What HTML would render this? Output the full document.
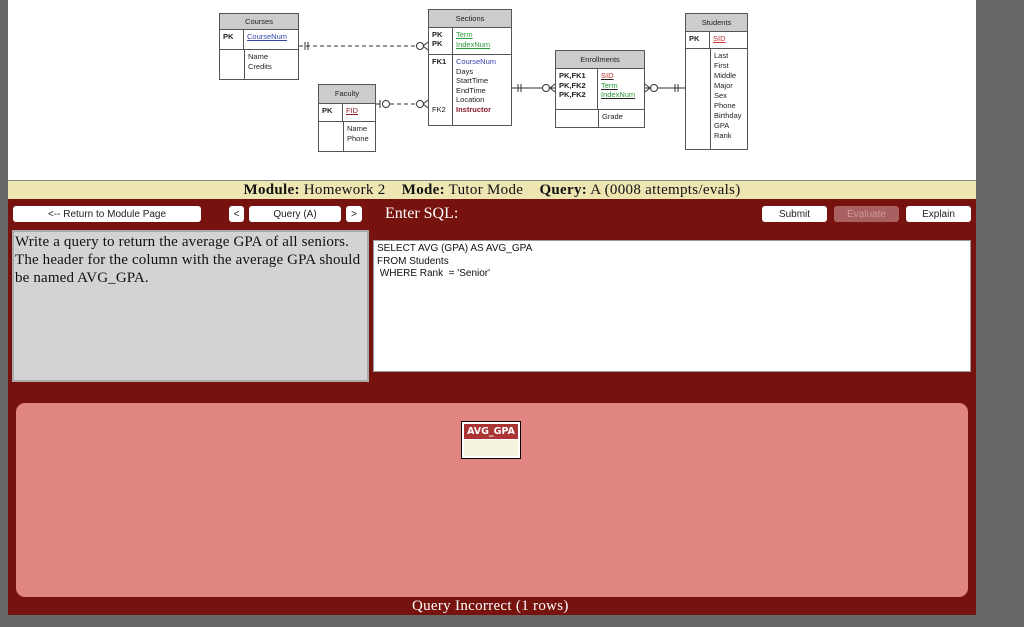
<!DOCTYPE html>
<html><head><style>
body{margin:0;width:1024px;height:627px;background:#666;position:relative;overflow:hidden;font-family:"Liberation Sans",sans-serif}
.a{position:absolute}
.t{position:absolute;border:1px solid #555;background:#fff;font-size:7.5px;color:#222;box-sizing:border-box}
.h{background:#ccc;border-bottom:1px solid #555;text-align:center;box-sizing:border-box}
.r{border-bottom:1px solid #555;display:flex;box-sizing:border-box}
.k{border-right:1px solid #555;font-weight:bold;padding:2px 3px;box-sizing:border-box}
.v{padding:2px 3px;line-height:9.5px}
.btn{position:absolute;top:206px;height:16px;background:#fff;border-radius:3px;font-size:10px;text-align:center;line-height:18px;color:#222}
.ser{font-family:"Liberation Serif",serif}
</style></head><body>
<div class="a" style="left:8px;top:0;width:968px;height:180px;background:#fff"></div>
<div class="a" style="left:8px;top:180px;width:968px;height:1px;background:#888"></div>
<svg class="a" style="left:0;top:0" width="1024" height="180">
<g stroke="#333" stroke-width="1" fill="none">
<line x1="299" y1="46" x2="420" y2="46" stroke-dasharray="4,3"/><line x1="305" y1="42" x2="305" y2="50"/><line x1="308" y1="42" x2="308" y2="50"/><circle cx="420" cy="46" r="3.5" fill="#fff"/><path d="M423 46 L428 42 M423 46 L428 50"/>
<line x1="376" y1="104" x2="420" y2="104" stroke-dasharray="4,3"/><line x1="380" y1="100" x2="380" y2="108"/><circle cx="386" cy="104" r="3.5" fill="#fff"/><circle cx="420" cy="104" r="3.5" fill="#fff"/><path d="M423 104 L428 100 M423 104 L428 108"/>
<line x1="512" y1="88" x2="555" y2="88"/><line x1="518" y1="84" x2="518" y2="92"/><line x1="521" y1="84" x2="521" y2="92"/><circle cx="546" cy="88" r="3.5" fill="#fff"/><path d="M550 88 L555 84 M550 88 L555 92"/>
<line x1="645" y1="88" x2="685" y2="88"/><path d="M650 88 L645 84 M650 88 L645 92"/><circle cx="654" cy="88" r="3.5" fill="#fff"/><line x1="675" y1="84" x2="675" y2="92"/><line x1="678" y1="84" x2="678" y2="92"/>
</g></svg>
<div class="t" style="left:219px;top:13px;width:80px;height:67px"><div class="h" style="height:16px;line-height:15px">Courses</div><div class="r" style="height:20px"><div class="k" style="width:24px">PK</div><div class="v" style="color:#3344aa;text-decoration:underline">CourseNum</div></div><div style="display:flex;height:29px"><div style="width:24px;border-right:1px solid #555"></div><div class="v">Name<br>Credits</div></div></div>
<div class="t" style="left:428px;top:9px;width:84px;height:117px"><div class="h" style="height:18px;line-height:17px">Sections</div><div class="r" style="height:27px"><div class="k" style="width:24px;line-height:9px">PK<br>PK</div><div class="v" style="color:#2a9a3a;text-decoration:underline">Term<br>IndexNum</div></div><div style="display:flex;height:70px"><div class="k" style="width:24px;line-height:9.5px;border-right:1px solid #555">FK1<br><br><br><br><br><span style="font-weight:normal">FK2</span></div><div class="v"><span style="color:#3344aa">CourseNum</span><br>Days<br>StartTime<br>EndTime<br>Location<br><span style="color:#8a1a2a;font-weight:bold">Instructor</span></div></div></div>
<div class="t" style="left:318px;top:84px;width:58px;height:68px"><div class="h" style="height:19px;line-height:18px">Faculty</div><div class="r" style="height:18px"><div class="k" style="width:24px">PK</div><div class="v" style="color:#8a1a2a;text-decoration:underline">FID</div></div><div style="display:flex;height:29px"><div style="width:24px;border-right:1px solid #555"></div><div class="v">Name<br>Phone</div></div></div>
<div class="t" style="left:555px;top:50px;width:90px;height:78px"><div class="h" style="height:18px;line-height:17px">Enrollments</div><div class="r" style="height:41px"><div class="k" style="width:42px;line-height:9.5px">PK,FK1<br>PK,FK2<br>PK,FK2</div><div class="v" style="text-decoration:underline"><span style="color:#c03030">SID</span><br><span style="color:#2a9a3a">Term<br>IndexNum</span></div></div><div style="display:flex;height:17px"><div style="width:42px;border-right:1px solid #555"></div><div class="v">Grade</div></div></div>
<div class="t" style="left:685px;top:13px;width:63px;height:137px"><div class="h" style="height:18px;line-height:17px">Students</div><div class="r" style="height:17px"><div class="k" style="width:24px">PK</div><div class="v" style="color:#c03030;text-decoration:underline">SID</div></div><div style="display:flex;height:100px"><div style="width:24px;border-right:1px solid #555"></div><div class="v" style="line-height:10px">Last<br>First<br>Middle<br>Major<br>Sex<br>Phone<br>Birthday<br>GPA<br>Rank</div></div></div>

<div class="a ser" style="left:8px;top:181px;width:968px;height:18px;background:#ede6b2;text-align:center;font-size:15px;letter-spacing:0.3px;line-height:18px;color:#111"><b>Module:</b> Homework 2 &nbsp;&nbsp; <b>Mode:</b> Tutor Mode &nbsp;&nbsp; <b>Query:</b> A (0008 attempts/evals)</div>
<div class="a" style="left:8px;top:199px;width:968px;height:416px;background:#77130f"></div>
<div class="btn" style="left:13px;width:188px">&lt;-- Return to Module Page</div>
<div class="btn" style="left:229px;width:15px">&lt;</div>
<div class="btn" style="left:249px;width:92px">Query (A)</div>
<div class="btn" style="left:346px;width:16px">&gt;</div>
<div class="a ser" style="left:385px;top:205px;font-size:16px;color:#fff">Enter SQL:</div>
<div class="btn" style="left:762px;width:65px">Submit</div>
<div class="btn" style="left:834px;width:65px;background:#a86060;color:#c99">Evaluate</div>
<div class="btn" style="left:906px;width:65px">Explain</div>
<div class="a ser" style="left:12px;top:230px;width:357px;height:152px;background:#d3d3d3;border:2px solid #aaa;box-sizing:border-box;font-size:15px;letter-spacing:0.15px;line-height:18px;padding:1px 1px;color:#111">Write a query to return the average GPA of all seniors. The header for the column with the average GPA should be named AVG_GPA.</div>
<div class="a" style="left:373px;top:240px;width:598px;height:132px;background:#fff;border:1px solid #999;box-sizing:border-box;font-size:10px;line-height:12.5px;padding:2px 3px;color:#111">SELECT AVG (GPA) AS AVG_GPA<br>FROM Students<br>&nbsp;WHERE Rank &nbsp;= 'Senior'</div>
<div class="a" style="left:16px;top:403px;width:952px;height:194px;background:#e08582;border-radius:9px"></div>
<div class="a" style="left:461px;top:421px;width:60px;height:38px;border:1px solid #000;background:#fff;box-sizing:border-box">
<div style="margin:2px 2px 0;height:15px;background:#a33;color:#fff;font-size:9.5px;font-weight:bold;text-align:center;line-height:15px;font-family:'DejaVu Sans',sans-serif">AVG_GPA</div>
<div style="margin:1px 2px;height:16px;background:#f4f4de"></div></div>
<div class="a ser" style="left:412px;top:598px;font-size:15px;letter-spacing:0.3px;color:#fff">Query Incorrect (1 rows)</div>
</body></html>
